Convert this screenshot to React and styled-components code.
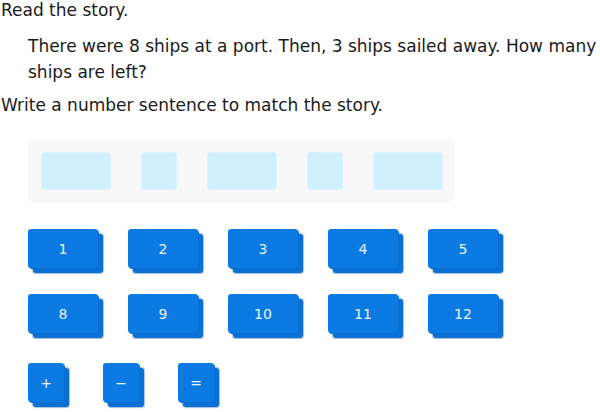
import styled, { createGlobalStyle } from "styled-components";

const GlobalStyle = createGlobalStyle`
  body {
    margin: 0;
    background: #ffffff;
    font-family: "DejaVu Sans", Verdana, sans-serif;
    color: #1a1a1a;
  }
`;

const Page = styled.div`
  width: 600px;
  height: 412px;
  overflow: hidden;
  padding: 0 0 0 1px;
  box-sizing: border-box;
`;

const Prompt = styled.p`
  margin: 0;
  font-size: 17px;
  line-height: 21px;
`;

const Story = styled.p`
  margin: 12px 0 0 27px;
  font-size: 17px;
  line-height: 26px;
  width: 575px;
`;

const Instruction = styled.p`
  margin: 10px 0 0;
  font-size: 17px;
  line-height: 21px;
`;

const AnswerArea = styled.div`
  margin: 23px 0 0 27px;
  width: 426px;
  height: 64px;
  box-sizing: border-box;
  padding: 13px 0 0 13px;
  background: #f8f8f8;
  border-radius: 5px;
  display: flex;
  gap: 30px;
`;

const Slot = styled.div`
  width: ${({ $wide }) => ($wide ? "70px" : "36px")};
  height: 38px;
  box-sizing: border-box;
  background: #d0f0fd;
  border: 1px solid #d8f3fd;
  border-radius: 4px;
`;

const TileRow = styled.div`
  display: flex;
  gap: ${({ $gap }) => $gap}px;
  margin: ${({ $top }) => $top}px 0 0 27px;
`;

const Tile = styled.button`
  width: ${({ $small }) => ($small ? "36px" : "70px")};
  height: 39px;
  padding: 0;
  border: none;
  border-radius: 3px;
  background: #0b7be3;
  color: #e8f3ff;
  font-family: "DejaVu Sans", Verdana, sans-serif;
  font-size: 14px;
  box-shadow: 1px 1px 0 #0a6fd0, 5px 5px 0 #0a70d4, 5px 5px 1px 1px rgba(0, 70, 150, 0.35);
  cursor: pointer;
`;

const numbersTop = ["1", "2", "3", "4", "5"];
const numbersBottom = ["8", "9", "10", "11", "12"];
const operators = ["+", "\u2212", "="];

export default function App() {
  return (
    <>
      <GlobalStyle />
      <Page>
        <Prompt>Read the story.</Prompt>
        <Story>
          There were 8 ships at a port. Then, 3 ships sailed away. How many ships are left?
        </Story>
        <Instruction>Write a number sentence to match the story.</Instruction>
        <AnswerArea>
          <Slot $wide />
          <Slot />
          <Slot $wide />
          <Slot />
          <Slot $wide />
        </AnswerArea>
        <TileRow $top={26} $gap={30}>
          {numbersTop.map((n) => (
            <Tile key={n}>{n}</Tile>
          ))}
        </TileRow>
        <TileRow $top={26} $gap={30}>
          {numbersBottom.map((n) => (
            <Tile key={n}>{n}</Tile>
          ))}
        </TileRow>
        <TileRow $top={30} $gap={39}>
          {operators.map((o) => (
            <Tile key={o} $small>
              {o}
            </Tile>
          ))}
        </TileRow>
      </Page>
    </>
  );
}
